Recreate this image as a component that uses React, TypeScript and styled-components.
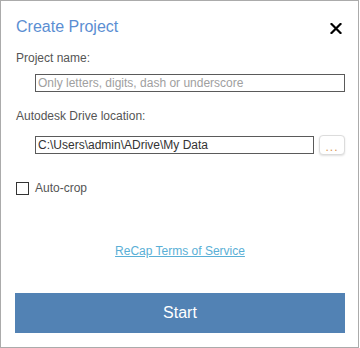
import styled, { createGlobalStyle } from "styled-components";

const GlobalStyle = createGlobalStyle`
  html, body {
    margin: 0;
    padding: 0;
    background: #ffffff;
  }
  * {
    box-sizing: border-box;
  }
`;

const Dialog = styled.div`
  width: 359px;
  height: 348px;
  border: 1px solid #ababab;
  background: #fff;
  padding: 16px 13px 0 14px;
  display: flex;
  flex-direction: column;
  font-family: "Liberation Sans", Arial, sans-serif;
  font-size: 12px;
  color: #555;
`;

const Header = styled.div`
  display: flex;
  align-items: center;
  justify-content: space-between;
  height: 20px;
  padding-left: 1px;
`;

const Title = styled.h1`
  margin: 0;
  font-size: 16px;
  font-weight: normal;
  line-height: 20px;
  color: #5b8ed2;
`;

const CloseButton = styled.button`
  border: none;
  background: none;
  padding: 0;
  margin-right: 3px;
  margin-top: 2px;
  width: 12px;
  height: 12px;
  display: flex;
  align-items: center;
  justify-content: center;
  cursor: pointer;
`;

const Label = styled.div<{ $top: number }>`
  margin-top: ${(p) => p.$top}px;
  line-height: 14px;
  padding-left: 1px;
  color: #555;
`;

const Row = styled.div<{ $top: number }>`
  margin-top: ${(p) => p.$top}px;
  display: flex;
  align-items: center;
  gap: 5px;
  padding-left: 20px;
`;

const TextInput = styled.input`
  flex: 1;
  height: 18px;
  border: 1px solid #5a5a5a;
  padding: 0 2px;
  font-family: "Liberation Sans", Arial, sans-serif;
  font-size: 12px;
  color: #333;
  outline: none;
  &::placeholder {
    color: #a0a0a0;
  }
`;

const BrowseButton = styled.button`
  width: 26px;
  height: 20px;
  border: 1px solid #dcdcdc;
  border-radius: 4px;
  background: #fff;
  box-shadow: 0 1px 2px rgba(0, 0, 0, 0.12);
  padding: 0;
  font-family: "Liberation Sans", Arial, sans-serif;
  font-size: 12px;
  line-height: 22px;
  color: #dc9552;
  letter-spacing: 1px;
  cursor: pointer;
`;

const CheckRow = styled.label`
  margin-top: 26px;
  display: flex;
  align-items: center;
  gap: 6px;
  padding-left: 1px;
  line-height: 15px;
  color: #555;
  cursor: pointer;
`;

const Box = styled.span`
  width: 13px;
  height: 13px;
  border: 1px solid #333;
  background: #fff;
`;

const LinkWrap = styled.div`
  margin-top: 48px;
  text-align: center;
  line-height: 14px;
`;

const TermsLink = styled.a`
  color: #5aafd6;
  text-decoration: underline;
  cursor: pointer;
`;

const StartButton = styled.button`
  margin-top: 35px;
  width: 330px;
  height: 40px;
  border: none;
  background: #5282b4;
  color: #fff;
  font-family: "Liberation Sans", Arial, sans-serif;
  font-size: 16px;
  cursor: pointer;
`;

const App = () => {
  return (
    <>
      <GlobalStyle />
      <Dialog>
        <Header>
          <Title>Create Project</Title>
          <CloseButton aria-label="Close">
            <svg width="12" height="11" viewBox="0 0 12 11">
              <path d="M1.5 1 L10.5 10 M10.5 1 L1.5 10" stroke="#000" strokeWidth="2.2" strokeLinecap="square" />
            </svg>
          </CloseButton>
        </Header>
        <Label $top={14}>Project name:</Label>
        <Row $top={9}>
          <TextInput placeholder="Only letters, digits, dash or underscore" />
        </Row>
        <Label $top={17}>Autodesk Drive location:</Label>
        <Row $top={12}>
          <TextInput defaultValue="C:\Users\admin\ADrive\My Data" />
          <BrowseButton>...</BrowseButton>
        </Row>
        <CheckRow>
          <Box />
          Auto-crop
        </CheckRow>
        <LinkWrap>
          <TermsLink>ReCap Terms of Service</TermsLink>
        </LinkWrap>
        <StartButton>Start</StartButton>
      </Dialog>
    </>
  );
};

export default App;
